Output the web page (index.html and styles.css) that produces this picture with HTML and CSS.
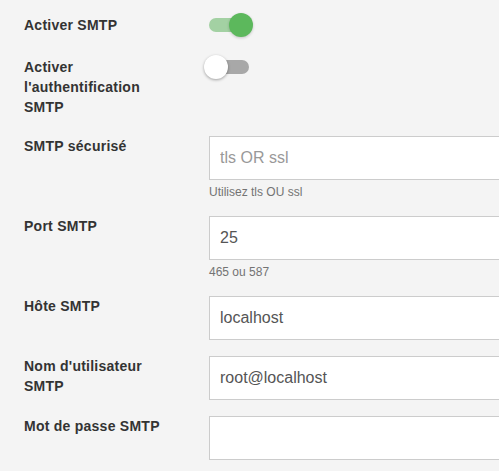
FILE: index.html
```html
<!DOCTYPE html>
<html lang="fr">
<head>
<meta charset="utf-8">
<title>SMTP</title>
<link rel="stylesheet" href="styles.css">
</head>
<body>
<form class="settings">
  <div class="row row-toggle first">
    <label class="label">Activer SMTP</label>
    <div class="field">
      <span class="switch on"><span class="track"></span><span class="knob"></span></span>
    </div>
  </div>
  <div class="row row-toggle second">
    <label class="label label-wrap">Activer l'authentification SMTP</label>
    <div class="field">
      <span class="switch"><span class="track"></span><span class="knob"></span></span>
    </div>
  </div>
  <div class="row">
    <label class="label">SMTP sécurisé</label>
    <div class="field">
      <input class="input" type="text" placeholder="tls OR ssl">
      <p class="help">Utilisez tls OU ssl</p>
    </div>
  </div>
  <div class="row">
    <label class="label">Port SMTP</label>
    <div class="field">
      <input class="input" type="text" value="25">
      <p class="help">465 ou 587</p>
    </div>
  </div>
  <div class="row">
    <label class="label">Hôte SMTP</label>
    <div class="field">
      <input class="input" type="text" value="localhost">
    </div>
  </div>
  <div class="row">
    <label class="label label-wrap">Nom d'utilisateur SMTP</label>
    <div class="field">
      <input class="input" type="text" value="root@localhost">
    </div>
  </div>
  <div class="row">
    <label class="label">Mot de passe SMTP</label>
    <div class="field">
      <input class="input" type="password" value="">
    </div>
  </div>
</form>
</body>
</html>
```

FILE: styles.css
```css
html, body {
  margin: 0;
  padding: 0;
  background: #f4f4f4;
  overflow: hidden;
}

body {
  font-family: "Liberation Sans", Arial, sans-serif;
  color: #333;
}

.settings {
  width: 560px;
  padding: 15px 0 0 24px;
}

.row {
  display: grid;
  grid-template-columns: 185px 340px;
  margin-bottom: 16px;
}

.row-toggle.first {
  min-height: 26px;
}

.row-toggle.second {
  margin-bottom: 19px;
}

.label {
  font-size: 14px;
  font-weight: bold;
  line-height: 20px;
  letter-spacing: 0.25px;
  color: #333;
}

.label-wrap {
  width: 130px;
}

.field {
  display: flex;
  flex-direction: column;
}

.switch {
  position: relative;
  display: block;
  width: 40px;
  height: 20px;
  margin-top: 0;
}

.switch .track {
  position: absolute;
  left: 0;
  top: 3px;
  width: 40px;
  height: 14px;
  border-radius: 7px;
  background: #a8a8a8;
}

.switch .knob {
  position: absolute;
  left: -5px;
  top: -2px;
  width: 24px;
  height: 24px;
  border-radius: 50%;
  background: #ffffff;
  box-shadow: 0 1px 3px rgba(0, 0, 0, 0.35);
}

.switch.on .track {
  background: #a3d1a3;
}

.switch.on .knob {
  left: 20px;
  background: #5cb85c;
  box-shadow: 0 1px 3px rgba(0, 0, 0, 0.2);
}

.input {
  box-sizing: border-box;
  display: block;
  width: 340px;
  height: 44px;
  margin: 0;
  padding: 0 10px;
  border: 1px solid #cccccc;
  border-radius: 0;
  background: #ffffff;
  font-family: "Liberation Sans", Arial, sans-serif;
  font-size: 16px;
  color: #555555;
  outline: none;
}

.input::placeholder {
  color: #999999;
}

.help {
  margin: 4px 0 0 0;
  font-size: 12px;
  line-height: 16px;
  color: #737373;
}
```
